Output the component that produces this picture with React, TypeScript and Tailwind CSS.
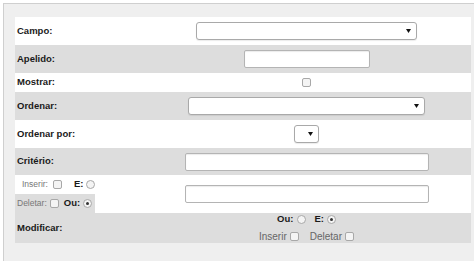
const font = { fontFamily: '"Liberation Sans", Arial, sans-serif' };

function Select({ w }: { w: string }) {
  return (
    <div
      className={`${w} flex h-[18px] items-center justify-end rounded-[3px] border border-[#a9a9a9] bg-white pr-[5px] shadow-[0_1px_1px_rgba(0,0,0,0.08)]`}
    >
      <svg width="5" height="4" viewBox="0 0 5 4">
        <path d="M0 0 H5 L2.5 4 Z" fill="#111" />
      </svg>
    </div>
  );
}

function TextBox({ w }: { w: string }) {
  return (
    <div
      className={`${w} h-[18px] rounded-[2px] border border-[#b4b4b4] bg-white shadow-[inset_0_1px_1px_rgba(0,0,0,0.08)]`}
    />
  );
}

function Check() {
  return (
    <span className="inline-block h-[9px] w-[9px] rounded-[2px] border border-[#a8a8a8] bg-[#f4f4f4]" />
  );
}

function Radio({ on = false }: { on?: boolean }) {
  return (
    <span className="inline-flex h-[9px] w-[9px] items-center justify-center rounded-full border border-[#a8a8a8] bg-[#f4f4f4]">
      {on && <span className="h-[3px] w-[3px] rounded-full bg-[#333]" />}
    </span>
  );
}

function Row({
  label,
  h,
  gray = false,
  children,
}: {
  label: React.ReactNode;
  h: string;
  gray?: boolean;
  children?: React.ReactNode;
}) {
  return (
    <div className={`flex ${h} items-center ${gray ? 'bg-[#dddddd]' : 'bg-white'}`}>
      <div className="w-[127px] shrink-0 pl-[2px] text-[9.5px] font-bold text-[#1a1a1a]">{label}</div>
      <div className="flex flex-1 justify-center">{children}</div>
    </div>
  );
}

export default function App() {
  return (
    <div className="h-[261px] w-[474px] overflow-hidden bg-white pl-[3px] pt-[3px]" style={font}>
      <div className="h-full border-l border-t border-[#cfcfcf] bg-[#efefef] pl-[11px] pr-[3px] pt-[13px]">
        <Row label="Campo:" h="h-[28px]">
          <Select w="w-[221px]" />
        </Row>
        <Row label="Apelido:" h="h-[28px]" gray>
          <TextBox w="w-[126px]" />
        </Row>
        <Row label="Mostrar:" h="h-[19px]">
          <Check />
        </Row>
        <Row label="Ordenar:" h="h-[28px]" gray>
          <Select w="w-[237px]" />
        </Row>
        <Row label="Ordenar por:" h="h-[28px]">
          <Select w="w-[25px]" />
        </Row>
        <Row label="Critério:" h="h-[27px]" gray>
          <TextBox w="w-[244px]" />
        </Row>

        <div className="flex h-[38px] items-center bg-white">
          <div className="flex w-[127px] shrink-0 flex-col">
            <div className="flex h-[19px] w-[80px] items-center pl-[7px] text-[8.5px] text-[#777]">
              <span>Inserir:</span>
              <span className="ml-[5px] flex"><Check /></span>
              <span className="ml-[12px] text-[9.5px] font-bold text-[#1a1a1a]">E:</span>
              <span className="ml-[3px] flex"><Radio /></span>
            </div>
            <div className="flex h-[19px] w-[80px] items-center bg-[#dddddd] pl-[2px] text-[8.5px] text-[#777]">
              <span>Deletar:</span>
              <span className="ml-[3px] flex"><Check /></span>
              <span className="ml-[5px] text-[9.5px] font-bold text-[#1a1a1a]">Ou:</span>
              <span className="ml-[3px] flex"><Radio on /></span>
            </div>
          </div>
          <div className="flex flex-1 justify-center">
            <TextBox w="w-[244px]" />
          </div>
        </div>

        <Row label="Modificar:" h="h-[30px]" gray>
          <div className="flex flex-col items-center gap-[3px]">
            <div className="flex items-center text-[9.5px] font-bold text-[#1a1a1a]">
              <span>Ou:</span>
              <span className="ml-[4px] flex"><Radio /></span>
              <span className="ml-[8px]">E:</span>
              <span className="ml-[3px] flex"><Radio on /></span>
            </div>
            <div className="flex items-center text-[10px] text-[#666]">
              <span>Inserir</span>
              <span className="ml-[3px] flex"><Check /></span>
              <span className="ml-[11px]">Deletar</span>
              <span className="ml-[3px] flex"><Check /></span>
            </div>
          </div>
        </Row>
      </div>
    </div>
  );
}
